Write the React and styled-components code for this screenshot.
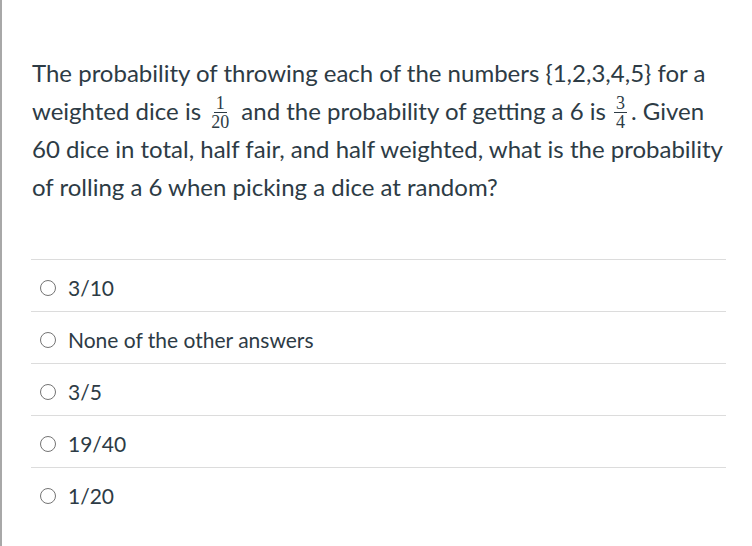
import React from 'react';
import styled, { createGlobalStyle } from 'styled-components';

const GlobalStyle = createGlobalStyle`
    html, body {
        margin: 0;
        padding: 0;
        background: #fff;
    }
    body {
        font-family: Lato, "Open Sans", sans-serif;
        color: #2d3b45;
    }
`;

const ANSWERS = [ '3/10', 'None of the other answers', '3/5', '19/40', '1/20' ];

const
    Page = styled.div`
        height: 546px;
        box-sizing: border-box;
        border-left: 2px solid #a8a8a8;
        padding: 54px 26px 0 29px;
    `,
    Question = styled.div`
        font-size: 24px;
        line-height: 38px;
        padding-left: 1px;
    `,
    Frac = styled.span`
        display: inline-flex;
        flex-direction: column;
        align-items: center;
        vertical-align: middle;
        font-family: "Liberation Serif", "DejaVu Serif", serif;
        font-size: 18px;
        line-height: 14px;
        margin: -6px 4px -6px 2px;
        position: relative;
        top: -1px;
    `,
    Num = styled.span`
        padding: 0 2px 2px;
        border-bottom: 1px solid #2d3b45;
    `,
    Den = styled.span`
        padding: 2px 2px 0;
    `,
    Answers = styled.div`
        margin-top: 53px;
    `,
    Row = styled.label`
        display: flex;
        align-items: center;
        height: 52px;
        border-top: 1px solid #dcdcdc;
        padding: 4px 0 0 9px;
        box-sizing: border-box;
        font-size: 21px;
    `,
    Radio = styled.span`
        width: 14px;
        height: 14px;
        border: 1.5px solid #747474;
        border-radius: 50%;
        margin-right: 12px;
        flex-shrink: 0;
    `
;

const Fraction = ( { n, d } ) => (
    <Frac>
        <Num>{ n }</Num>
        <Den>{ d }</Den>
    </Frac>
);

const App = () => (
    <>
        <GlobalStyle />
        <Page>
            <Question>
                The probability of throwing each of the numbers {'{'}1,2,3,4,5{'}'} for a
                weighted dice is <Fraction n="1" d="20" /> and the probability of getting a 6 is <Fraction n="3" d="4" />. Given
                60 dice in total, half fair, and half weighted, what is the probability
                of rolling a 6 when picking a dice at random?
            </Question>
            <Answers>
                { ANSWERS.map( a => (
                    <Row key={ a }>
                        <Radio />
                        { a }
                    </Row>
                ) ) }
            </Answers>
        </Page>
    </>
);

export default App;
